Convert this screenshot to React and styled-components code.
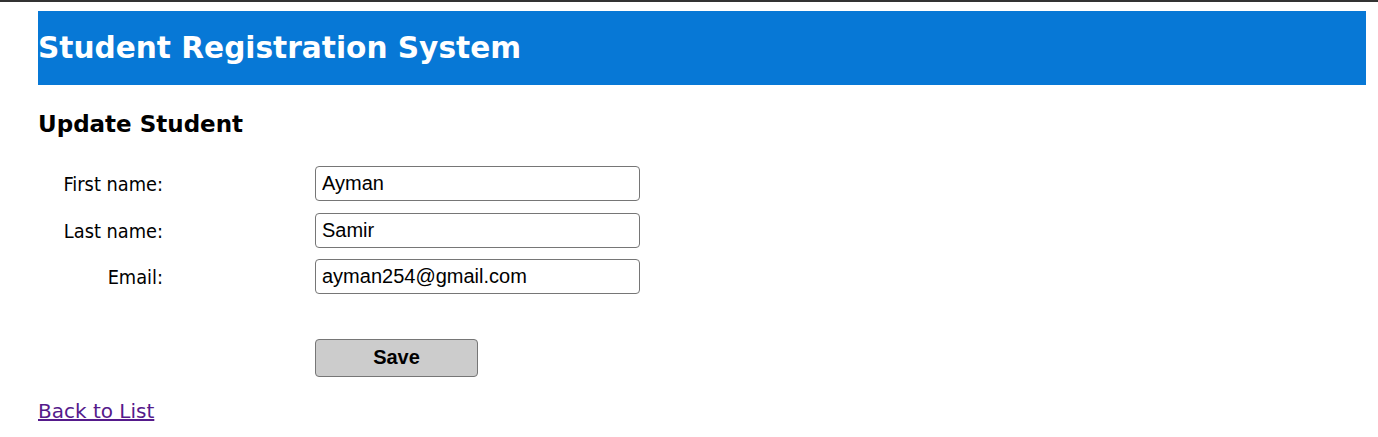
import React, { useState } from "react";
import styled, { createGlobalStyle } from "styled-components";

const GlobalStyle = createGlobalStyle`
  html, body {
    margin: 0;
    padding: 0;
    background: #fff;
  }
  body {
    border-top: 2px solid #333;
    font-family: "DejaVu Sans", Verdana, sans-serif;
    color: #000;
  }
`;

const Page = styled.div`
  padding: 9px 12px 0 38px;
`;

const Header = styled.header`
  background: #0778d6;
  height: 74px;
  display: flex;
  align-items: center;
`;

const Title = styled.h1`
  margin: 0;
  color: #fff;
  font-family: "DejaVu Sans", Verdana, sans-serif;
  font-weight: bold;
  font-size: 29.6px;
`;

const SubTitle = styled.h2`
  margin: 26px 0 29px;
  font-size: 23px;
  font-weight: bold;
`;

const Form = styled.form`
  display: grid;
  grid-template-columns: 125px 325px;
  column-gap: 152px;
  row-gap: 11.5px;
  align-items: center;
`;

const Label = styled.label`
  font-family: "DejaVu Sans Condensed", Tahoma, sans-serif;
  font-size: 19.8px;
  text-align: right;
  padding-top: 2px;
`;

const Input = styled.input`
  box-sizing: border-box;
  width: 325px;
  height: 35px;
  padding: 0 6px;
  border: 1px solid #767676;
  border-radius: 4px;
  font-family: "Liberation Sans", Arial, sans-serif;
  font-size: 20px;
  color: #000;
  outline: none;
`;

const Actions = styled.div`
  grid-column: 2;
  padding-top: 33px;
`;

const SaveButton = styled.button`
  width: 163px;
  height: 38px;
  background: #ccc;
  border: 1px solid #767676;
  border-radius: 4px;
  font-family: "Liberation Sans", Arial, sans-serif;
  font-weight: bold;
  font-size: 20px;
  color: #000;
  cursor: pointer;
`;

const BackLink = styled.a`
  display: inline-block;
  margin-top: 22px;
  font-size: 20px;
  color: #551a8b;
  text-decoration: underline;
`;

export default function App() {
  const [student, setStudent] = useState({
    firstName: "Ayman",
    lastName: "Samir",
    email: "ayman254@gmail.com"
  });

  const update = (field, value) => setStudent({ ...student, [field]: value });

  return (
    <>
      <GlobalStyle />
      <Page>
        <Header>
          <Title>Student Registration System</Title>
        </Header>
        <SubTitle>Update Student</SubTitle>
        <Form onSubmit={e => e.preventDefault()}>
          <Label htmlFor="firstName">First name:</Label>
          <Input id="firstName" value={student.firstName} onChange={e => update("firstName", e.target.value)} />
          <Label htmlFor="lastName">Last name:</Label>
          <Input id="lastName" value={student.lastName} onChange={e => update("lastName", e.target.value)} />
          <Label htmlFor="email">Email:</Label>
          <Input id="email" value={student.email} onChange={e => update("email", e.target.value)} />
          <Actions>
            <SaveButton type="submit">Save</SaveButton>
          </Actions>
        </Form>
        <BackLink href="#">Back to List</BackLink>
      </Page>
    </>
  );
}
